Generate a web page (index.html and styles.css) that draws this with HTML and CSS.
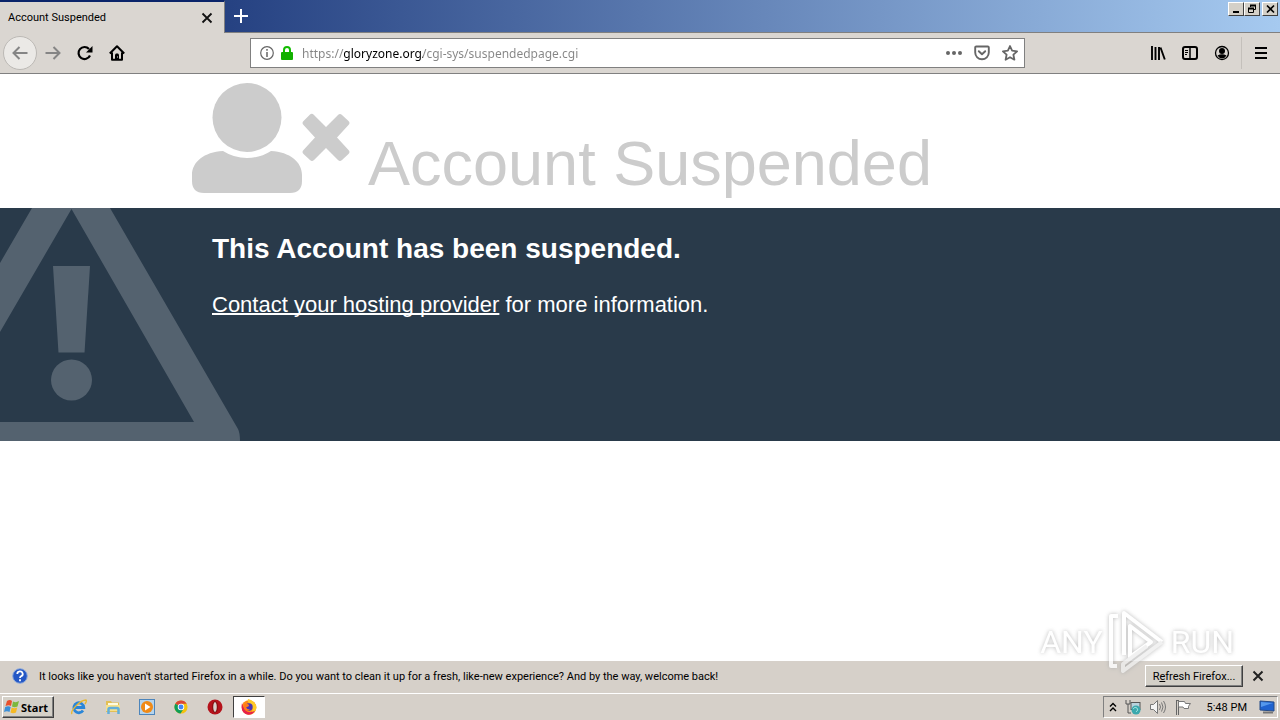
FILE: index.html
```
<!DOCTYPE html>
<html lang="en">
<head>
    <meta charset="UTF-8">
    <meta name="viewport" content="width=device-width, initial-scale=1.0">
    <title>Account Suspended</title>
    <link rel="stylesheet" href="styles.css">
</head>
<body>
    <div class="titlebar">
        <div class="tab">
            <span class="tab-title">Account Suspended</span>
            <button class="icon-btn" aria-label="Close tab">
                <svg width="12" height="12" viewBox="0 0 12 12"><path d="M1.5 1.5l9 9m0-9l-9 9" stroke="#111" stroke-width="1.8"/></svg>
            </button>
        </div>
        <button class="icon-btn new-tab" aria-label="New tab">
            <svg width="14" height="14" viewBox="0 0 14 14"><path d="M7 0v14M0 7h14" stroke="#fff" stroke-width="2"/></svg>
        </button>
        <div class="window-controls">
            <button class="win-btn" aria-label="Minimize"><svg width="11" height="10" viewBox="0 0 11 10"><path d="M2 8h6" stroke="#000" stroke-width="2"/></svg></button>
            <button class="win-btn" aria-label="Restore"><svg width="11" height="10" viewBox="0 0 11 10"><path d="M3.500 3V1.500h5v4H7M1.500 4.500h5v4h-5z" fill="none" stroke="#000"/><path d="M3 1.500h6M1 4.500h6" stroke="#000" stroke-width="2"/></svg></button>
            <button class="win-btn win-close" aria-label="Close"><svg width="11" height="10" viewBox="0 0 11 10"><path d="M2 1.500l7 7m0-7l-7 7" stroke="#000" stroke-width="1.700"/></svg></button>
        </div>
    </div>

    <div class="toolbar">
        <div class="nav-buttons">
            <button class="icon-btn back" aria-label="Back"><svg width="16" height="16" viewBox="0 0 16 16"><path d="M15.500 8H1.500M7.500 2L1.500 8l6 6" fill="none" stroke="#858585" stroke-width="2"/></svg></button>
            <button class="icon-btn" aria-label="Forward"><svg width="16" height="16" viewBox="0 0 16 16"><path d="M.5 8h14M8.500 2l6 6-6 6" fill="none" stroke="#858585" stroke-width="2"/></svg></button>
            <button class="icon-btn" aria-label="Reload"><svg width="16" height="16" viewBox="0 0 16 16"><path d="M13 10.500A6 6 0 1 1 12 4" fill="none" stroke="#000" stroke-width="2.200"/><path d="M15.500 1v6.500H9z"/></svg></button>
            <button class="icon-btn" aria-label="Home"><svg width="16" height="16" viewBox="0 0 16 16"><path d="M.8 8.500L8 1.300l7.200 7.200M3 7.500V14.800h10V7.500" fill="none" stroke="#000" stroke-width="2" stroke-linejoin="round"/><path d="M6 15V9.500L7 8.500h2l1 1V15z"/><path d="M8.500 11.500v1" stroke="#ddd"/></svg></button>
        </div>
        <div class="urlbar">
            <svg width="14" height="14" viewBox="0 0 14 14"><circle cx="7" cy="7" r="6.300" fill="none" stroke="#666" stroke-width="1.200"/><path d="M7 6v5M7 3v1.700" stroke="#666" stroke-width="1.500"/></svg>
            <svg class="lock" width="14" height="14" viewBox="0 0 14 14"><path d="M4 7V4a3 3 0 0 1 6 0v3" fill="none" stroke="#12bc00" stroke-width="2"/><rect x="1" y="6" width="12" height="8" rx="1" fill="#12b000"/></svg>
            <input class="url" type="text" aria-label="Address" value="https://gloryzone.org/cgi-sys/suspendedpage.cgi">
            <button class="icon-btn" aria-label="Page actions"><svg width="16" height="16" viewBox="0 0 16 16" fill="#666"><circle cx="2" cy="8" r="2"/><circle cx="8" cy="8" r="2"/><circle cx="14" cy="8" r="2"/></svg></button>
            <button class="icon-btn" aria-label="Save to Pocket"><svg width="16" height="16" viewBox="0 0 16 16" fill="none" stroke="#666" stroke-width="1.900" stroke-linecap="round" stroke-linejoin="round"><path d="M2.200 1.500h11.600a1 1 0 0 1 1 1V7.500a6.800 6.800 0 0 1-13.600 0v-5a1 1 0 0 1 1-1z"/><path d="M4.800 6.200L8 9.300l3.200-3.100"/></svg></button>
            <button class="icon-btn" aria-label="Bookmark"><svg width="16" height="16" viewBox="0 0 16 16"><path d="M8 1l2.100 4.700 5 .6-3.700 3.400 1 5L8 12.200l-4.400 2.500 1-5L.9 6.300l5-.6z" fill="none" stroke="#666" stroke-width="1.800" stroke-linejoin="round"/></svg></button>
        </div>
        <div class="tools">
            <button class="icon-btn" aria-label="Library"><svg width="16" height="16" viewBox="0 0 16 16"><path d="M2 1v14M5.500 2v13M9 2v13M10.500 2.500l4.300 12" stroke="#000" stroke-width="1.900"/></svg></button>
            <button class="icon-btn" aria-label="Sidebars"><svg width="16" height="16" viewBox="0 0 16 16"><rect x="1" y="2" width="14" height="12" rx="2" fill="none" stroke="#000" stroke-width="2"/><path d="M8 2v12" stroke="#000" stroke-width="1.500"/><path d="M3 5.500h3M3 7.500h3M3 9.500h2" stroke="#000"/></svg></button>
            <button class="icon-btn" aria-label="Account"><svg width="16" height="16" viewBox="0 0 16 16"><circle cx="8" cy="8" r="6.500" fill="none" stroke="#000" stroke-width="1.300"/><circle cx="8" cy="6" r="3"/><path d="M3.500 10.500Q8 8 12.500 10.500Q11 13.300 8 13.300T3.500 10.500z"/></svg></button>
        </div>
        <button class="icon-btn menu" aria-label="Menu"><svg width="12" height="14" viewBox="0 0 12 14"><path d="M0 2h12M0 7h12M0 12h12" stroke="#000" stroke-width="2"/></svg></button>
    </div>

    <main class="page">
        <header class="status">
            <svg width="158" height="110" viewBox="0 0 158 110" fill="#ccc">
                <circle cx="55" cy="34.500" r="34.500"/>
                <path d="M31 68Q42 75 55 75T79 68C98 69 110 79 110 92V98Q110 110 98 110H12Q0 110 0 98V92C0 79 12 69 31 68z"/>
                <path d="M118 31.500Q120 30 122 32L134 44 146 32Q148 30 150 32L156.500 38Q158.500 40 156.500 42L145 54.500 156.500 67Q158.500 69 156.500 71L150 77Q148 79 146 77L134 65 122 77Q120 79 118 77L111.500 71Q109.500 69 111.500 67L123 54.500 111.500 42Q109.500 40 111.500 38z"/>
            </svg>
            <h1>Account Suspended</h1>
        </header>
        <section class="info">
            <svg class="warning" width="240" height="233" viewBox="0 0 240 233" fill="#54626f">
                <path fill-rule="evenodd" d="M32 0H110L238 221Q240 225 240 233H0V214H194L71.500 1 0 124V55z"/>
                <path d="M53 58H90L84.500 144.500H58.500z"/>
                <circle cx="71.500" cy="172" r="20.500"/>
            </svg>
            <h2>This Account has been suspended.</h2>
            <p><a href="#">Contact your hosting provider</a> for more information.</p>
        </section>
        <div class="watermark" aria-hidden="true">
            <span>ANY</span>
            <svg width="60" height="66" viewBox="0 0 60 66" fill="none" stroke="#fff" stroke-width="4" stroke-linejoin="round">
                <path d="M11 7H4v50h6M17 46V4l38 29M23 17v31l21-15z"/>
                <path d="M55 33L16 62V55l24-18" stroke="#eee"/>
            </svg>
            <span>RUN</span>
        </div>
    </main>

    <div class="notification">
        <svg width="16" height="16" viewBox="0 0 16 16"><circle cx="8" cy="8" r="7.300" fill="#2457c5" stroke="#8eaadb"/><path d="M5.300 6a2.700 2.500 0 1 1 3.800 2.200Q8 8.700 8 10M8 11.300v2" fill="none" stroke="#fff" stroke-width="1.800"/></svg>
        <span class="message">It looks like you haven't started Firefox in a while. Do you want to clean it up for a fresh, like-new experience? And by the way, welcome back!</span>
        <button class="classic-btn">R<u>e</u>fresh Firefox...</button>
        <button class="icon-btn" aria-label="Dismiss"><svg width="12" height="12" viewBox="0 0 12 12"><path d="M1.500 1.500l9 9m0-9l-9 9" stroke="#222" stroke-width="2"/></svg></button>
    </div>

    <div class="taskbar">
        <button class="classic-btn start">
            <svg width="16" height="16" viewBox="0 0 16 16"><path d="M3 2q3-2 5 0L7 7Q5 5.500 1.500 7z" fill="#e8502d"/><path d="M9 2.500q3 1.500 6-.5l-1.500 5.500Q10.500 9 8 7.500z" fill="#7cb83d"/><path d="M1.200 8q3-1.500 5.500 0L5.500 13Q3 11.500 0 13z" fill="#3b8fd8"/><path d="M7.700 8.500q2.500 1.500 5.500 0L12 13.500Q9 15 6.500 13.500z" fill="#f6b924"/></svg>
            Start
        </button>
        <div class="launchers">
            <button class="launcher" aria-label="Internet Explorer"><svg width="16" height="16" viewBox="0 0 16 16" fill="none"><path d="M3.500 8.500h9.300A5 5 0 1 0 12 11.500" stroke="#2a86d8" stroke-width="2.800"/><path d="M1 15C-1 12 9 1 15 1q1 1-1 4" stroke="#e9b830" stroke-width="1.400"/></svg></button>
            <button class="launcher" aria-label="Explorer"><svg width="16" height="16" viewBox="0 0 16 16"><path d="M1 2h5l1 1.500h7V13H1z" fill="#e3bf55"/><path d="M3 4h10v5H3z" fill="#fffbe0"/><path d="M1 6h14v6H1z" fill="#f5e08c"/><path d="M3.500 15v-4.500q0-1.500 1.500-1.500h7q1.500 0 1.500 1.500V15" fill="none" stroke="#62aedb" stroke-width="2.500"/></svg></button>
            <button class="launcher" aria-label="Media Player"><svg width="16" height="16" viewBox="0 0 16 16"><rect x=".5" y=".5" width="15" height="15" fill="#b5d4ed" stroke="#4d85bb"/><circle cx="8" cy="8" r="6" fill="#f08a17"/><path d="M6 4.500L11.500 8 6 11.500z" fill="#fff"/></svg></button>
            <button class="launcher" aria-label="Chrome"><svg width="14" height="14" viewBox="0 0 16 16"><circle cx="8" cy="8" r="7.500" fill="#f4c20d"/><path d="M8 8L1.500 4.200A7.500 7.500 0 0 1 14.500 4.300H8z" fill="#db4437"/><path d="M1.500 4.200A7.500 7.500 0 0 0 7.500 15.500L11 10 8 8z" fill="#0f9d58"/><circle cx="8" cy="8" r="3.700" fill="#fff"/><circle cx="8" cy="8" r="2.800" fill="#4285f4"/></svg></button>
            <button class="launcher" aria-label="Opera"><svg width="16" height="16" viewBox="0 0 16 16"><circle cx="8" cy="8" r="7.500" fill="#b5121b"/><ellipse cx="8" cy="8" rx="2.300" ry="5.500" fill="#d9d0cb" stroke="#700" /></svg></button>
            <button class="launcher active" aria-label="Firefox"><svg width="16" height="16" viewBox="0 0 16 16"><circle cx="8" cy="8.500" r="7.300" fill="#ff8a16"/><path d="M7 0q8 2 8.500 9-1 5-6 6.500Q14 9 9 5 6 3 7 0z" fill="#ffca28"/><path d="M1 4Q-1 14 7 15.800q5 0 7-4Q8 15 4 11 2 8 1 4z" fill="#e6224b"/><circle cx="8" cy="8" r="3.700" fill="#4a35b5"/><path d="M3 5q5-1 5 2l-3 1.500q1 2 4 2-4 3-6-1z" fill="#ff7a1a"/></svg></button>
        </div>
        <div class="tray">
            <svg width="8" height="10" viewBox="0 0 8 10" fill="none" stroke="#000" stroke-width="1.400"><path d="M1 4.500l3-3 3 3M1 9l3-3 3 3"/></svg>
            <svg width="16" height="16" viewBox="0 0 16 16"><path d="M1 1v4h4V1M3 5v9h3" fill="none" stroke="#555"/><rect x="6" y="3.500" width="9" height="7" fill="#b9d2dc" stroke="#555"/><circle cx="11" cy="11" r="4.500" fill="#3ba8ad"/><path d="M8 10q2-3 4-1t-1 4" fill="none" stroke="#9de0dc"/></svg>
            <svg width="18" height="16" viewBox="0 0 18 16" fill="none" stroke="#777"><path d="M1.500 5.500h3l4-4v13l-4-4h-3z" fill="#f4f4f4"/><path d="M10.500 5q2 3 0 6M12.500 3.500q3 4.500 0 9M14.500 2q4 6 0 12"/></svg>
            <svg width="16" height="16" viewBox="0 0 16 16"><path d="M1.500 1v15M3.500 1v15M1 1.500h3" stroke="#666" fill="none"/><path d="M3.500 2.500h6l1 2h5q-3 3-2 5H9l-1-1.500H3.500z" fill="#fff" stroke="#777"/></svg>
            <span class="clock">5:48 PM</span>
            <svg width="16" height="14" viewBox="0 0 16 14"><path d="M1 1l14 1v9L1 10z" fill="#1f62cf" stroke="#274c87"/><path d="M2 2l12 1-12 4z" fill="#5598ec"/><path d="M4 12.500h10" stroke="#777" stroke-width="2"/></svg>
        </div>
    </div>
</body>
</html>
```
FILE: styles.css
```
* {
    box-sizing: border-box;
}

body {
    margin: 0;
    height: 100vh;
    display: flex;
    flex-direction: column;
    background-color: #fff;
    color: #000;
    font-family: Roboto, sans-serif;
    font-size: 11px;
    overflow: hidden;
}

button {
    font: inherit;
    color: inherit;
    padding: 0;
    cursor: pointer;
}

svg {
    display: block;
    flex: none;
}

.icon-btn {
    display: flex;
    align-items: center;
    justify-content: center;
    border: none;
    background: none;
}

/* Window title and tabs */
.titlebar {
    display: flex;
    height: 33px;
    background: linear-gradient(to right, #0a246a, #a6caf0);
    border-bottom: 1px solid #808080;
}

.tab {
    display: flex;
    align-items: center;
    justify-content: space-between;
    width: 225px;
    height: 33px;
    padding: 0 11px 0 8px;
    border-top: 2px solid #0a246a;
    border-right: 1px solid #808080;
    background-color: #dad6d1;
}

.new-tab {
    width: 32px;
}

.window-controls {
    display: flex;
    margin-left: auto;
    padding: 2px 2px 0 0;
}

.win-btn {
    width: 16px;
    height: 14px;
    display: flex;
    align-items: center;
    justify-content: center;
    background-color: #d4d0c8;
    border: 1px solid;
    border-color: #fff #404040 #404040 #fff;
}

.win-close {
    margin-left: 2px;
}

/* Navigation toolbar */
.toolbar {
    display: flex;
    align-items: center;
    height: 41px;
    background-color: #dad6d1;
    border-bottom: 1px solid #808080;
}

.nav-buttons {
    display: flex;
    align-items: center;
    gap: 16px;
    width: 250px;
    padding-left: 3px;
}

.back {
    width: 34px;
    height: 34px;
    margin-right: -8px;
    border: 1px solid #bcb9b5;
    border-radius: 50%;
    background-color: #ebe9e6;
}

.urlbar {
    display: flex;
    align-items: center;
    gap: 12px;
    flex: 1;
    height: 30px;
    padding: 0 6px 0 9px;
    background-color: #fff;
    border: 1px solid #808080;
}

.lock {
    margin-left: -6px;
}

.url {
    flex: 1;
    min-width: 0;
    padding: 0;
    border: none;
    outline: none;
    margin-left: -4px;
    font-family: "Noto Sans", sans-serif;
    font-size: 12px;
    /* only the host name is dark */
    background: linear-gradient(to right, #858585 42px, #000 42px, #000 121px, #858585 121px);
    -webkit-background-clip: text;
    background-clip: text;
    -webkit-text-fill-color: transparent;
}

.tools {
    display: flex;
    gap: 16px;
    padding: 0 11px 0 125px;
}

.menu {
    width: 39px;
    height: 32px;
    border-left: 1px solid #c4c0bb;
}

/* Web page */
.page {
    position: relative;
    flex: 1;
    font-family: "Liberation Sans", Arial, sans-serif;
}

.status {
    display: flex;
    align-items: flex-end;
    gap: 18px;
    height: 134px;
    padding: 0 15% 15px;
    color: #ccc;
}

.status h1 {
    margin: 0;
    font-size: 63px;
    font-weight: normal;
    line-height: 60px;
    white-space: nowrap;
}

.info {
    position: relative;
    height: 233px;
    padding: 25px 15% 0 calc(15% + 20px);
    background-color: #293a4a;
    color: #fff;
}

.warning {
    position: absolute;
    left: 0;
    top: 0;
}

.info h2 {
    margin: 0 0 24px;
    font-size: 28px;
    line-height: 32px;
}

.info p {
    margin: 0;
    font-size: 22px;
    line-height: 32px;
}

.info a {
    color: #fff;
    text-decoration-thickness: 2px;
    text-decoration-skip-ink: none;
}

.watermark {
    position: absolute;
    right: 46px;
    bottom: -14px;
    display: flex;
    align-items: center;
    gap: 4px;
    color: #fff;
    font-family: Roboto, sans-serif;
    font-size: 32px;
    filter: drop-shadow(0 0 2px #aaa);
    opacity: 0.8;
    pointer-events: none;
    z-index: 1;
}

/* Notification bar */
.notification {
    display: flex;
    align-items: center;
    height: 33px;
    padding: 0 16px 2px 12px;
    background-color: #d6d0c9;
    border-bottom: 1px solid #fff;
}

.message {
    flex: 1;
    margin-left: 11px;
    white-space: nowrap;
}

.classic-btn {
    background-color: #d4d0c8;
    border: 1px solid;
    border-color: #fff #404040 #404040 #fff;
    box-shadow: inset -1px -1px #808080;
}

.notification .classic-btn {
    width: 98px;
    height: 22px;
    margin-right: 9px;
}

/* Taskbar */
.taskbar {
    display: flex;
    align-items: center;
    height: 26px;
    padding: 0 2px;
    background-color: #d6d0c9;
}

.start {
    display: flex;
    align-items: center;
    gap: 1px;
    width: 52px;
    height: 22px;
    padding-left: 1px;
    font-family: "Noto Sans", sans-serif;
    font-weight: bold;
}

.launchers {
    display: flex;
    gap: 2px;
    padding-left: 9px;
}

.launcher {
    display: flex;
    align-items: center;
    justify-content: center;
    width: 32px;
    height: 22px;
    border: 1px solid transparent;
    background: none;
}

.launcher.active {
    background-color: #fff;
    border-color: #404040 #fff #fff #404040;
}

.tray {
    display: flex;
    align-items: center;
    gap: 8px;
    height: 22px;
    margin-left: auto;
    padding: 0 2px 0 5px;
    border: 1px solid;
    border-color: #808080 #fff #fff #808080;
}

.clock {
    margin: 0 4px 0 8px;
}
```
